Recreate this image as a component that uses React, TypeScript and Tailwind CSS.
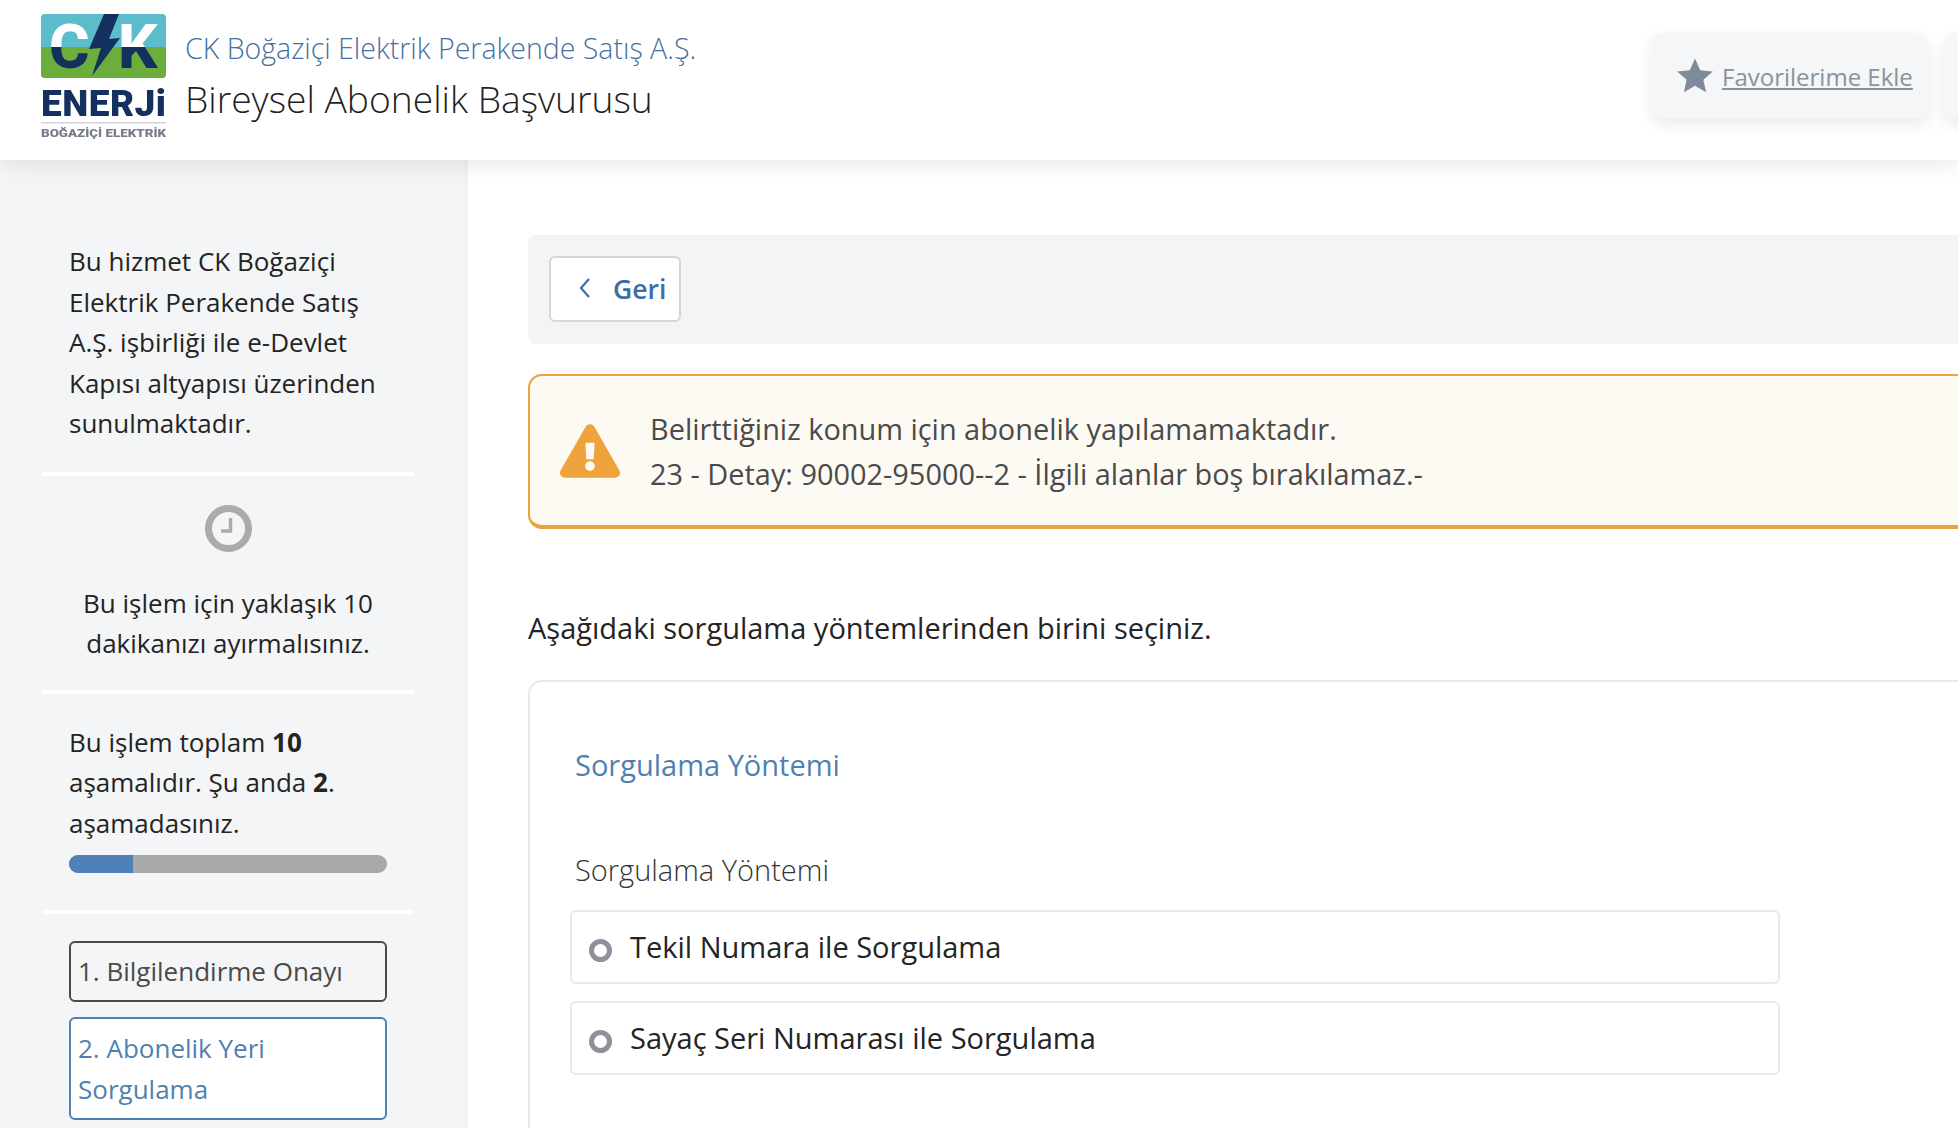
import React from "react";
import { FaExclamationTriangle } from "react-icons/fa";

const sans = "font-['Open_Sans',sans-serif]";

function Logo() {
  const font = { fontFamily: "Roboto, sans-serif" };
  const letters = (fill: string) => (
    <>
      <text x="9" y="54" fontSize="62" fontWeight="800" fill={fill} style={font}>C</text>
      <text x="78" y="54" fontSize="62" fontWeight="800" fill={fill} style={font}>K</text>
    </>
  );
  return (
    <svg width="128" height="126" viewBox="0 0 128 126" className="shrink-0 blur-[0.4px]">
      <defs>
        <clipPath id="logo-top"><rect x="1" y="0" width="125" height="33" /></clipPath>
        <clipPath id="logo-bot"><rect x="1" y="33" width="125" height="32" /></clipPath>
      </defs>
      <rect x="1" y="0" width="125" height="64" rx="4" fill="#5dbccb" />
      <path d="M1 33H126V60a4 4 0 0 1-4 4H5a4 4 0 0 1-4-4Z" fill="#6cae3c" />
      <g clipPath="url(#logo-top)">{letters("#ffffff")}</g>
      <g clipPath="url(#logo-bot)">{letters("#14305f")}</g>
      <path d="M64 0H79L69 25L80 24L52 62L61 34L49 35Z" fill="#14305f" />
      <text x="1" y="102" fontSize="37" fontWeight="900" fill="#14305f" textLength="125" lengthAdjust="spacing" style={font}>ENERJi</text>
      <rect x="1" y="108" width="125" height="1.5" fill="#d3d4dd" />
      <text x="1" y="123" fontSize="11.5" fontWeight="900" fill="#777c8c" textLength="125" lengthAdjust="spacingAndGlyphs" style={font}>BOĞAZİÇİ ELEKTRİK</text>
    </svg>
  );
}

function Header() {
  return (
    <header className="relative z-10 flex h-[160px] items-start overflow-x-clip bg-white pl-[40px] shadow-[0_0_26px_rgba(0,0,0,0.13)]">
      <div className="mt-[14px]">
        <Logo />
      </div>
      <div className="ml-[17px] mt-[28px] flex flex-col font-light">
        <span className="text-[28.5px] leading-[40px] text-[#47709f]">CK Boğaziçi Elektrik Perakende Satış A.Ş.</span>
        <span className="mt-[6px] text-[37.2px] leading-[50px] text-[#1f1f1f]">Bireysel Abonelik Başvurusu</span>
      </div>
      <div className="ml-auto mr-[-100px] mt-[33px] flex gap-[16px]">
        <div className="flex h-[85px] w-[276px] items-center rounded-[10px] bg-[#f4f6f8] pl-[25px] shadow-[0_6px_16px_rgba(0,0,0,0.09)]">
          <svg width="36" height="35" viewBox="0 0 36 35" className="shrink-0">
            <path d="M18 0.5 23.2 12.2 35.8 13.4 26.4 21.8 29.1 34.2 18 27.8 6.9 34.2 9.6 21.8 0.2 13.4 12.8 12.2Z" fill="#7f8b98" />
          </svg>
          <span className="ml-[9px] mt-[2px] text-[24px] text-[#8a929b] underline">Favorilerime Ekle</span>
        </div>
        <div className="h-[85px] w-[114px] rounded-[10px] bg-[#f4f6f8] shadow-[0_6px_16px_rgba(0,0,0,0.09)]" />
      </div>
    </header>
  );
}

function Divider() {
  return <div className="mx-[42px] h-[4px] bg-white" />;
}

function Sidebar() {
  return (
    <aside className="w-[468px] shrink-0 self-stretch bg-[#f3f5f7] pr-[12px] pt-[81px] text-[26px] leading-[40.5px] text-[#242424] shadow-[inset_-5px_0_5px_-3px_rgba(0,0,0,0.02)]">
      <p className="mx-[69px]">
        Bu hizmet CK Boğaziçi Elektrik Perakende Satış A.Ş. işbirliği ile e-Devlet Kapısı altyapısı üzerinden sunulmaktadır.
      </p>
      <div className="mt-[28px]"><Divider /></div>
      <div className="mt-[29px] flex justify-center">
        <svg width="47" height="47" viewBox="0 0 47 47" fill="none" stroke="#a9abad">
          <circle cx="23.5" cy="23.5" r="20" strokeWidth="7" />
          <path d="M25.5 13V26H16" strokeWidth="3.4" />
        </svg>
      </div>
      <p className="mx-[69px] mt-[31px] text-center">Bu işlem için yaklaşık 10 dakikanızı ayırmalısınız.</p>
      <div className="mt-[26px]"><Divider /></div>
      <p className="mx-[69px] mt-[28px]">
        Bu işlem toplam <b className="font-bold">10</b> aşamalıdır. Şu anda <b className="font-bold">2</b>. aşamadasınız.
      </p>
      <div className="mx-[69px] mt-[12px] h-[18px] overflow-hidden rounded-[9px] bg-[#a8a9ab]">
        <div className="h-full bg-[#4f81b8]" style={{ width: "20%" }} />
      </div>
      <div className="mt-[37px]"><Divider /></div>
      <div className="mx-[69px] mt-[27px] flex flex-col gap-[15px]">
        <div className="h-[61px] rounded-[6px] border-2 border-[#4a4a4a] px-[7px] pt-[8px] text-[#4a4a4a]">1. Bilgilendirme Onayı</div>
        <div className="h-[103px] rounded-[6px] border-2 border-[#4f81b0] bg-white px-[7px] pt-[9px] text-[#4f81b0]">2. Abonelik Yeri Sorgulama</div>
      </div>
    </aside>
  );
}

function Option({ label }: { label: string }) {
  return (
    <div className="flex h-[74px] w-[1210px] items-center rounded-[6px] border-2 border-[#e9e9ea] pl-[17px]">
      <span className="mt-[6px] size-[23px] shrink-0 rounded-full border-[5px] border-[#8f909c] bg-white" />
      <span className="ml-[18px] text-[29px] leading-[44px] text-[#242424]">{label}</span>
    </div>
  );
}

function Main() {
  return (
    <main className="min-w-0 flex-1 overflow-hidden pl-[60px] pt-[75px]">
      <div className="w-[1600px]">
        <div className="flex h-[109px] items-start rounded-[8px] bg-[#f3f4f6] pl-[21px] pt-[21px]">
          <button className="flex h-[66px] w-[132px] items-center rounded-[6px] border-2 border-[#d5d6d8] bg-white pl-[27px]">
            <svg width="14" height="22" viewBox="0 0 14 22" fill="none" stroke="#3e6ca5" strokeWidth="2.2" className="mb-[3px]">
              <path d="M11 2 3 11l8 9" />
            </svg>
            <span className="ml-[21px] mt-[2px] text-[26.5px] font-semibold text-[#3e6ca5]">Geri</span>
          </button>
        </div>
        <div className="mt-[30px] flex h-[155px] items-center rounded-[14px] border-x-2 border-t-2 border-b-4 border-[#e9a33f] bg-[#fdf9f3] pl-[30px]">
          <FaExclamationTriangle size={60} className="shrink-0 text-[#efa33c]" />
          <p className="ml-[30px] text-[28.9px] leading-[45px] text-[#4a4a4a]">
            Belirttiğiniz konum için abonelik yapılamamaktadır.<br />23 - Detay: 90002-95000--2 - İlgili alanlar boş bırakılamaz.-
          </p>
        </div>
        <p className="mt-[76px] text-[29px] leading-[45px] text-[#242424]">Aşağıdaki sorgulama yöntemlerinden birini seçiniz.</p>
        <div className="mt-[30px] h-[600px] rounded-[14px] border-2 border-[#e9e9ea] pl-[45px] pt-[61px]">
          <h2 className="text-[29px] leading-[44px] text-[#4f81b0]">Sorgulama Yöntemi</h2>
          <div className="mt-[61px] text-[29px] font-light leading-[44px] text-[#333333]">Sorgulama Yöntemi</div>
          <div className="ml-[-5px] mt-[18px] flex flex-col gap-[17px]">
            <Option label="Tekil Numara ile Sorgulama" />
            <Option label="Sayaç Seri Numarası ile Sorgulama" />
          </div>
        </div>
      </div>
    </main>
  );
}

export default function App() {
  return (
    <div className={`flex h-[1128px] w-[1958px] flex-col overflow-hidden bg-white ${sans}`}>
      <Header />
      <div className="flex min-h-0 flex-1">
        <Sidebar />
        <Main />
      </div>
    </div>
  );
}
